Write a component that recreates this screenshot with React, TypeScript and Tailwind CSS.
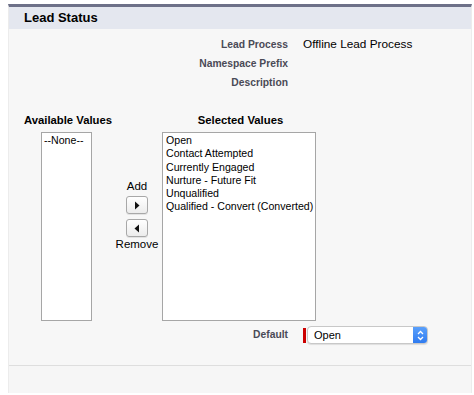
import React from "react";

const font = { fontFamily: '"Liberation Sans", Arial, Helvetica, sans-serif' };

function ArrowBtn({ dir }: { dir: "right" | "left" }) {
  return (
    <div className="w-[22px] h-[18px] rounded-[3px] border border-[#a8a8a8] bg-gradient-to-b from-white to-[#ececec] flex items-center justify-center shadow-[0_1px_0_rgba(0,0,0,0.08)]">
      <svg width="6" height="9" viewBox="0 0 6 9">
        {dir === "right" ? (
          <path d="M1 0.5 L5.5 4.5 L1 8.5 Z" fill="#111" />
        ) : (
          <path d="M5 0.5 L0.5 4.5 L5 8.5 Z" fill="#111" />
        )}
      </svg>
    </div>
  );
}

export default function App() {
  const selected = [
    "Open",
    "Contact Attempted",
    "Currently Engaged",
    "Nurture - Future Fit",
    "Unqualified",
    "Qualified - Convert (Converted)",
  ];
  return (
    <div className="w-[474px] h-[395px] bg-white pt-[4px] pl-[8px] pr-[2px] overflow-hidden" style={font}>
      <div className="border-t-[3px] border-[#6d7088] border-x border-x-[#ececec] bg-[#f7f7f7]">
        <div className="h-[22px] bg-[#e4e7ef] pl-[15px] flex items-center text-[13px] font-bold text-black">
          Lead Status
        </div>
        <div className="h-[336px]">
          <div className="pt-[6px] flex flex-col">
            {[
              ["Lead Process", "Offline Lead Process"],
              ["Namespace Prefix", ""],
              ["Description", ""],
            ].map(([l, v]) => (
              <div key={l} className="flex h-[19px] items-center">
                <div className="w-[279px] text-right text-[10.3px] font-bold text-[#4a4a56]">{l}</div>
                <div className="pl-[15px] text-[11.8px] text-black">{v}</div>
              </div>
            ))}
          </div>
          <div className="mt-[21px] pl-[15px] flex">
            <div className="w-[88px] flex flex-col items-center">
              <div className="h-[14px] text-[11.3px] font-bold text-black leading-[14px] whitespace-nowrap">Available Values</div>
              <div className="mt-[5px] ml-[-3px] w-[51px] h-[189px] bg-white border border-[#a6a6a6] pl-[2px] pt-[1px] text-[10.6px] leading-[13px] text-black">
                --None--
              </div>
            </div>
            <div className="w-[50px] flex flex-col items-center pt-[66px]">
              <div className="text-[11.5px] leading-[14px] text-black">Add</div>
              <div className="mt-[3px]">
                <ArrowBtn dir="right" />
              </div>
              <div className="mt-[5px]">
                <ArrowBtn dir="left" />
              </div>
              <div className="text-[11.5px] leading-[14px] text-black">Remove</div>
            </div>
            <div className="w-[155px] flex flex-col items-start">
              <div className="w-[155px] h-[14px] text-center pl-[2px] text-[11.3px] font-bold text-black leading-[14px] whitespace-nowrap">Selected Values</div>
              <div className="mt-[5px] w-[154px] h-[189px] bg-white border border-[#a6a6a6] pl-[3px] pt-[1px] text-[10.6px] leading-[13.3px] text-black">
                {selected.map((s) => (
                  <div key={s} className="whitespace-nowrap">{s}</div>
                ))}
              </div>
            </div>
          </div>
          <div className="mt-[5px] flex items-center h-[18px]">
            <div className="w-[279px] text-right text-[10.3px] font-bold text-[#4a4a56]">Default</div>
            <div className="ml-[15px] w-[3px] h-[15px] bg-[#c00]" />
            <div className="ml-[1px] w-[121px] h-[18px] rounded-[4px] border border-[#c8c8c8] bg-white flex items-center justify-between shadow-[0_1px_1px_rgba(0,0,0,0.1)] overflow-hidden">
              <span className="pl-[6px] text-[11px] text-black">Open</span>
              <div className="w-[14px] h-full bg-gradient-to-b from-[#5aa0fb] to-[#2f7bf0] flex items-center justify-center">
                <svg width="7" height="11" viewBox="0 0 7 11">
                  <path d="M1 4 L3.5 1.5 L6 4" stroke="white" strokeWidth="1.3" fill="none" />
                  <path d="M1 7 L3.5 9.5 L6 7" stroke="white" strokeWidth="1.3" fill="none" />
                </svg>
              </div>
            </div>
          </div>
        </div>
        <div className="border-t border-[#dedede] h-[28px] bg-[#f6f6f6]" />
      </div>
    </div>
  );
}
